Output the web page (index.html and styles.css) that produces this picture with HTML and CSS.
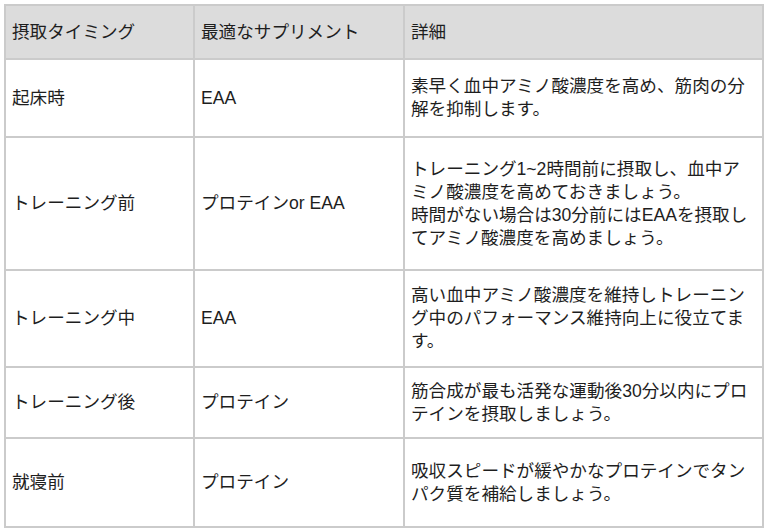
FILE: index.html
```html
<!DOCTYPE html>
<html lang="ja">
<head>
<meta charset="utf-8">
<title>摂取タイミング</title>
<link rel="stylesheet" href="styles.css">
</head>
<body>
<table class="supp">
  <colgroup>
    <col class="c1"><col class="c2"><col class="c3">
  </colgroup>
  <thead>
    <tr class="head"><th>摂取タイミング</th><th>最適なサプリメント</th><th>詳細</th></tr>
  </thead>
  <tbody>
    <tr class="r1"><td>起床時</td><td>EAA</td><td>素早く血中アミノ酸濃度を高め、筋肉の分解を抑制します。</td></tr>
    <tr class="r2"><td>トレーニング前</td><td>プロテインor EAA</td><td>トレーニング1~2時間前に摂取し、血中アミノ酸濃度を高めておきましょう。<br>時間がない場合は30分前にはEAAを摂取してアミノ酸濃度を高めましょう。</td></tr>
    <tr class="r3"><td>トレーニング中</td><td>EAA</td><td>高い血中アミノ酸濃度を維持しトレーニング中のパフォーマンス維持向上に役立てます。</td></tr>
    <tr class="r4"><td>トレーニング後</td><td>プロテイン</td><td>筋合成が最も活発な運動後30分以内にプロテインを摂取しましょう。</td></tr>
    <tr class="r5"><td>就寝前</td><td>プロテイン</td><td>吸収スピードが緩やかなプロテインでタンパク質を補給しましょう。</td></tr>
  </tbody>
</table>
</body>
</html>
```
FILE: styles.css
```css
html, body {
  margin: 0;
  padding: 0;
  background: #ffffff;
}
body {
  padding: 4px;
  font-family: "Liberation Sans", "Noto Sans CJK JP", sans-serif;
  font-size: 17.6px;
  color: #1e1e1e;
}
.supp {
  border-collapse: collapse;
  table-layout: fixed;
  width: 758px;
}
.c1 { width: 189px; }
.c2 { width: 210px; }
.c3 { width: 359px; }
.supp th, .supp td {
  border: 2px solid #cbcbcb;
  padding: 0 6px;
  text-align: left;
  vertical-align: middle;
  font-weight: normal;
  line-height: 23px;
}
.head th {
  background: #dcdcdc;
}
.head { height: 54px; }
.r1 { height: 78px; }
.r2 { height: 133px; }
.r3 { height: 97px; }
.r4 { height: 71px; }
.r5 { height: 89px; }
```
